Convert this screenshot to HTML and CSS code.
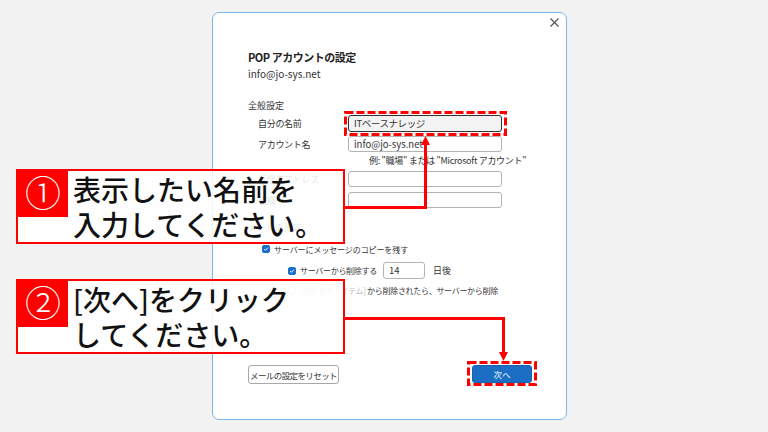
FILE: index.html
```html
<!DOCTYPE html>
<html lang="ja">
<head>
    <meta charset="UTF-8">
    <meta name="viewport" content="width=device-width, initial-scale=1.0">
    <title>POP アカウントの設定</title>
    <link rel="stylesheet" href="styles.css">
</head>
<body>
    <div class="dialog">
        <div class="titlebar">
            <svg class="close" width="9" height="9" viewBox="0 0 9 9">
                <path d="M0.5 0.5 L8.5 8.5 M8.5 0.5 L0.5 8.5" stroke="#555" stroke-width="1.2" fill="none"/>
            </svg>
        </div>
        <div class="content">
            <h1 class="title">POP アカウントの設定</h1>
            <p class="mail">info@jo-sys.net</p>

            <p class="section">全般設定</p>
            <div class="row row-1">
                <span class="label">自分の名前</span>
                <div class="input focused">ITベースナレッジ</div>
            </div>
            <div class="row row-2">
                <span class="label">アカウント名</span>
                <div class="input">info@jo-sys.net</div>
            </div>
            <p class="hint">例: "職場" または "Microsoft アカウント"</p>
            <div class="row row-3">
                <span class="label">返信先アドレス</span>
                <div class="input"></div>
            </div>
            <div class="row row-4">
                <span class="label">組織</span>
                <div class="input"></div>
            </div>

            <p class="section section-mail">メールの設定</p>
            <div class="check check-1">
                <span class="cb on"><svg width="8" height="8" viewBox="0 0 8 8"><path d="M1.5 4.2 L3.2 5.8 L6.6 2.2" stroke="#fff" stroke-width="1.3" fill="none"/></svg></span>
                <span>サーバーにメッセージのコピーを残す</span>
            </div>
            <div class="check check-2">
                <span class="cb on"><svg width="8" height="8" viewBox="0 0 8 8"><path d="M1.5 4.2 L3.2 5.8 L6.6 2.2" stroke="#fff" stroke-width="1.3" fill="none"/></svg></span>
                <span class="del-label">サーバーから削除する</span>
                <div class="input small">14</div>
                <span class="days">日後</span>
            </div>
            <div class="check check-3">
                <span class="cb"></span>
                <span><span class="muted">[削除済みアイテム]</span> から削除されたら、サーバーから削除</span>
            </div>

            <div class="buttons">
                <button class="btn reset">メールの設定をリセット</button>
                <button class="btn next">次へ</button>
            </div>
        </div>
    </div>

    <!-- 吹き出し -->
    <div class="callout callout-1">
        <div class="badge">①</div>
        <div class="callout-text">表示したい名前を<br>入力してください。</div>
    </div>
    <div class="callout callout-2">
        <div class="badge">②</div>
        <div class="callout-text">[次へ]をクリック<br>してください。</div>
    </div>

    <!-- 矢印と点線枠 -->
    <svg class="marks" width="768" height="432" viewBox="0 0 768 432">
        <rect x="345.5" y="112.5" width="160" height="22" fill="none" stroke="#f00" stroke-width="3" stroke-dasharray="8 3"/>
        <rect x="468.5" y="362.5" width="67" height="22" fill="none" stroke="#f00" stroke-width="3" stroke-dasharray="8 3"/>
        <path d="M345 207.5 H425.5 V143" fill="none" stroke="#f00" stroke-width="3"/>
        <path d="M425.5 136 L421 145 H430 Z" fill="#f00"/>
        <path d="M345 318.5 H503.5 V354" fill="none" stroke="#f00" stroke-width="3"/>
        <path d="M503.5 361 L499 352 H508 Z" fill="#f00"/>
    </svg>
</body>
</html>
```

FILE: styles.css
```css
body {
    margin: 0;
    padding: 12px 0 0 212px;
    width: 768px;
    height: 432px;
    box-sizing: border-box;
    overflow: hidden;
    background-color: #f2f2f2;
    font-family: "Noto Sans CJK JP", "Noto Sans", sans-serif;
    color: #333;
    position: relative;
}
.dialog {
    width: 355px;
    height: 408px;
    box-sizing: border-box;
    background-color: #fff;
    border: 1px solid #7ab6ec;
    border-radius: 7px;
    display: flex;
    flex-direction: column;
}
.titlebar {
    height: 22px;
    box-sizing: border-box;
    padding: 5px 7px 0 0;
    display: flex;
    justify-content: flex-end;
}
.content {
    flex: 1;
    display: flex;
    flex-direction: column;
    padding: 0 34px 35px 35px;
}
.title {
    margin: 14px 0 0;
    font-size: 11px;
    line-height: 16px;
    font-weight: bold;
    color: #222;
    letter-spacing: -0.5px;
}
.mail {
    margin: 2px 0 0;
    font-size: 10px;
    line-height: 14px;
}
.section {
    margin: 18px 0 0;
    font-size: 9px;
    line-height: 14px;
}
.row {
    display: flex;
    align-items: center;
}
.label {
    width: 90px;
    padding-left: 10px;
    font-size: 9px;
    letter-spacing: -0.3px;
}
.input {
    width: 154px;
    height: 16px;
    box-sizing: border-box;
    border: 1px solid #b4b4b4;
    border-radius: 3px;
    padding: 0 5px;
    font-size: 9.5px;
    line-height: 14px;
    color: #333;
    background-color: #fff;
}
.input.focused {
    height: 17px;
    border: 1.5px solid #333;
    background-color: #f3f3f3;
    letter-spacing: -0.4px;
}
.row-1 { margin-top: 2px; }
.row-2 { margin-top: 4px; }
.row-3 { margin-top: 1px; }
.row-4 { margin-top: 5px; }
.hint {
    margin: 0;
    height: 18px;
    line-height: 18px;
    padding-left: 121px;
    font-size: 9px;
    letter-spacing: -0.3px;
}
.section-mail {
    margin-top: 13px;
}
.check {
    display: flex;
    align-items: center;
    font-size: 8px;
    letter-spacing: -0.3px;
    height: 14px;
    white-space: nowrap;
}
.check-1 { margin: 7px 0 0 14px; letter-spacing: -0.1px; }
.check-2 { margin: 6px 0 0 40px; height: 17px; }
.check-3 { margin: 4px 0 0 40px; }
.cb {
    width: 8px;
    height: 8px;
    box-sizing: border-box;
    border: 1px solid #c8c8c8;
    border-radius: 2px;
    margin-right: 4px;
    display: flex;
    align-items: center;
    justify-content: center;
}
.cb.on {
    background-color: #1a6fc8;
    border-color: #1a6fc8;
}
.del-label {
    width: 83px;
}
.input.small {
    width: 42px;
    height: 17px;
    line-height: 15px;
    letter-spacing: 0;
}
.days {
    margin-left: 8px;
    font-size: 9px;
    letter-spacing: 0;
}
.muted {
    color: #bbb;
}
.buttons {
    margin-top: auto;
    display: flex;
    justify-content: space-between;
    align-items: flex-end;
}
.btn {
    font-family: "Noto Sans CJK JP", sans-serif;
    font-size: 8.5px;
    height: 19px;
    padding: 0;
    border-radius: 3px;
    cursor: pointer;
    letter-spacing: -0.6px;
    white-space: nowrap;
}
.reset {
    width: 91px;
    background-color: #fff;
    border: 1px solid #a8a8a8;
    color: #333;
}
.next {
    width: 60px;
    height: 18px;
    background-color: #1b6ec4;
    border: 1px solid #1560b0;
    color: #fff;
    margin-bottom: 1px;
    letter-spacing: 0;
}
.callout {
    position: absolute;
    left: 16px;
    width: 329px;
    height: 75px;
    box-sizing: border-box;
    border: 2px solid #f00;
    background-color: rgba(255, 255, 255, 0.88);
    display: flex;
    align-items: flex-start;
}
.callout-1 { top: 169px; }
.callout-2 { top: 279px; }
.badge {
    width: 50px;
    height: 46px;
    background-color: #f00;
    color: #fff;
    font-size: 36px;
    line-height: 40px;
    text-align: center;
    font-weight: 300;
}
.callout-text {
    margin-left: 5px;
    padding-top: 1px;
    font-size: 28px;
    line-height: 35px;
    font-weight: 500;
    color: #111;
    white-space: nowrap;
}
.marks {
    position: absolute;
    left: 0;
    top: 0;
    pointer-events: none;
}
```
